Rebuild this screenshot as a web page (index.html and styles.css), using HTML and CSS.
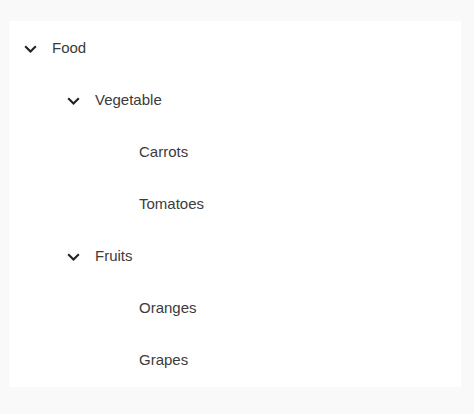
FILE: index.html
```html
<!DOCTYPE html>
<html lang="en">
<head>
    <meta charset="UTF-8">
    <meta name="viewport" content="width=device-width, initial-scale=1.0">
    <title>Tree</title>
    <link rel="stylesheet" href="styles.css">
</head>
<body>

<div class="panel">
    <ul class="tree">
        <li>
            <div class="node">
                <span class="toggle">
                    <svg width="13" height="8" viewBox="0 0 13 8"><path d="M1.2 1.2 L6.5 6.5 L11.8 1.2" fill="none" stroke="#222" stroke-width="2.1"/></svg>
                </span>
                <span class="label">Food</span>
            </div>
            <ul class="tree">
                <li>
                    <div class="node">
                        <span class="toggle">
                            <svg width="13" height="8" viewBox="0 0 13 8"><path d="M1.2 1.2 L6.5 6.5 L11.8 1.2" fill="none" stroke="#222" stroke-width="2.1"/></svg>
                        </span>
                        <span class="label">Vegetable</span>
                    </div>
                    <ul class="tree">
                        <li><div class="node"><span class="toggle"></span><span class="label">Carrots</span></div></li>
                        <li><div class="node"><span class="toggle"></span><span class="label">Tomatoes</span></div></li>
                    </ul>
                </li>
                <li>
                    <div class="node">
                        <span class="toggle">
                            <svg width="13" height="8" viewBox="0 0 13 8"><path d="M1.2 1.2 L6.5 6.5 L11.8 1.2" fill="none" stroke="#222" stroke-width="2.1"/></svg>
                        </span>
                        <span class="label">Fruits</span>
                    </div>
                    <ul class="tree">
                        <li><div class="node"><span class="toggle"></span><span class="label">Oranges</span></div></li>
                        <li><div class="node"><span class="toggle"></span><span class="label">Grapes</span></div></li>
                    </ul>
                </li>
            </ul>
        </li>
    </ul>
</div>

</body>
</html>
```

FILE: styles.css
```css
body {
    font-family: "Liberation Sans", Arial, sans-serif;
    margin: 0;
    padding: 21px 13px 26px 9px;
    background-color: #f9f9f9;
}

.panel {
    background-color: #fff;
    padding: 0 0 2px 15px;
}

.tree {
    list-style: none;
    margin: 0;
    padding: 0;
}

.tree .tree {
    padding-left: 43px;
}

.tree .tree .tree {
    padding-left: 44px;
}

.node {
    display: flex;
    align-items: center;
    height: 52px;
}

.toggle {
    width: 28px;
    display: flex;
    align-items: center;
    padding-top: 4px;
}

.label {
    font-size: 15px;
    color: #3b3b3b;
}
```
